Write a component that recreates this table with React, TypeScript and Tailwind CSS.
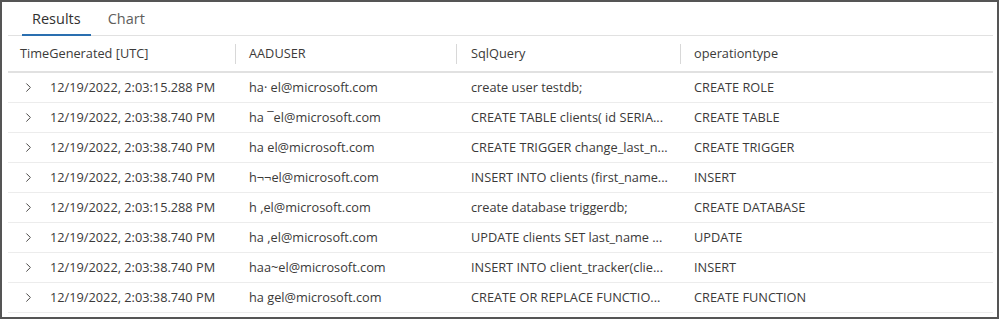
import { ChevronRight } from "lucide-react";

const rows = [
  ["12/19/2022, 2:03:15.288 PM", "ha·  el@microsoft.com", "create user testdb;", "CREATE ROLE"],
  ["12/19/2022, 2:03:38.740 PM", "ha  ¯el@microsoft.com", "CREATE TABLE clients( id SERIA...", "CREATE TABLE"],
  ["12/19/2022, 2:03:38.740 PM", "ha  el@microsoft.com", "CREATE TRIGGER change_last_n...", "CREATE TRIGGER"],
  ["12/19/2022, 2:03:38.740 PM", "h¬¬el@microsoft.com", "INSERT INTO clients (first_name...", "INSERT"],
  ["12/19/2022, 2:03:15.288 PM", "h  ,el@microsoft.com", "create database triggerdb;", "CREATE DATABASE"],
  ["12/19/2022, 2:03:38.740 PM", "ha  ,el@microsoft.com", "UPDATE clients SET last_name ...", "UPDATE"],
  ["12/19/2022, 2:03:38.740 PM", "haa~el@microsoft.com", "INSERT INTO client_tracker(clie...", "INSERT"],
  ["12/19/2022, 2:03:38.740 PM", "ha gel@microsoft.com", "CREATE OR REPLACE FUNCTIO...", "CREATE FUNCTION"],
];

export default function App() {
  return (
    <div
      className="w-[999px] h-[319px] bg-white border-2 border-[#555] text-[#3b3a39] text-[12.75px] overflow-hidden"
      style={{ fontFamily: '"Open Sans", "Noto Sans", sans-serif' }}
    >
      {/* Tabs */}
      <div className="flex h-[34px] ml-[6px] mr-[4px] border-b border-[#e1e1e1]">
        <div className="relative flex items-center px-[10px] ml-[14px] text-[14.5px] text-[#323130]">
          Results
          <div className="absolute left-0 right-0 bottom-[-1px] h-[2px] bg-[#2a6fb0]" />
        </div>
        <div className="flex items-center px-[17px] text-[14.5px] text-[#605e5c]">Chart</div>
      </div>

      {/* Header */}
      <div className="flex h-[37px] items-center ml-[6px] mr-[4px] border-b-2 border-[#e1e1e1]">
        <div className="w-[227px] pl-[12px]">TimeGenerated [UTC]</div>
        <div className="w-[221px] flex items-center">
          <span className="w-px h-[20px] bg-[#d8d8d8] mr-[13px]" />
          AADUSER
        </div>
        <div className="w-[224px] flex items-center">
          <span className="w-px h-[20px] bg-[#d8d8d8] mr-[14px]" />
          SqlQuery
        </div>
        <div className="flex-1 flex items-center">
          <span className="w-px h-[20px] bg-[#d8d8d8] mr-[13px]" />
          operationtype
        </div>
      </div>

      {/* Rows */}
      {rows.map((r, i) => (
        <div key={i} className="flex h-[30px] items-center ml-[6px] mr-[4px] border-b border-[#ececec]">
          <div className="w-[227px] flex items-center pl-[13px]">
            <ChevronRight className="w-[15px] h-[15px] text-[#484644] mr-[14px]" strokeWidth={1.6} />
            {r[0]}
          </div>
          <div className="w-[221px] pl-[14px]">{r[1]}</div>
          <div className="w-[224px] pl-[15px]">{r[2]}</div>
          <div className="flex-1 pl-[14px]">{r[3]}</div>
        </div>
      ))}
    </div>
  );
}
